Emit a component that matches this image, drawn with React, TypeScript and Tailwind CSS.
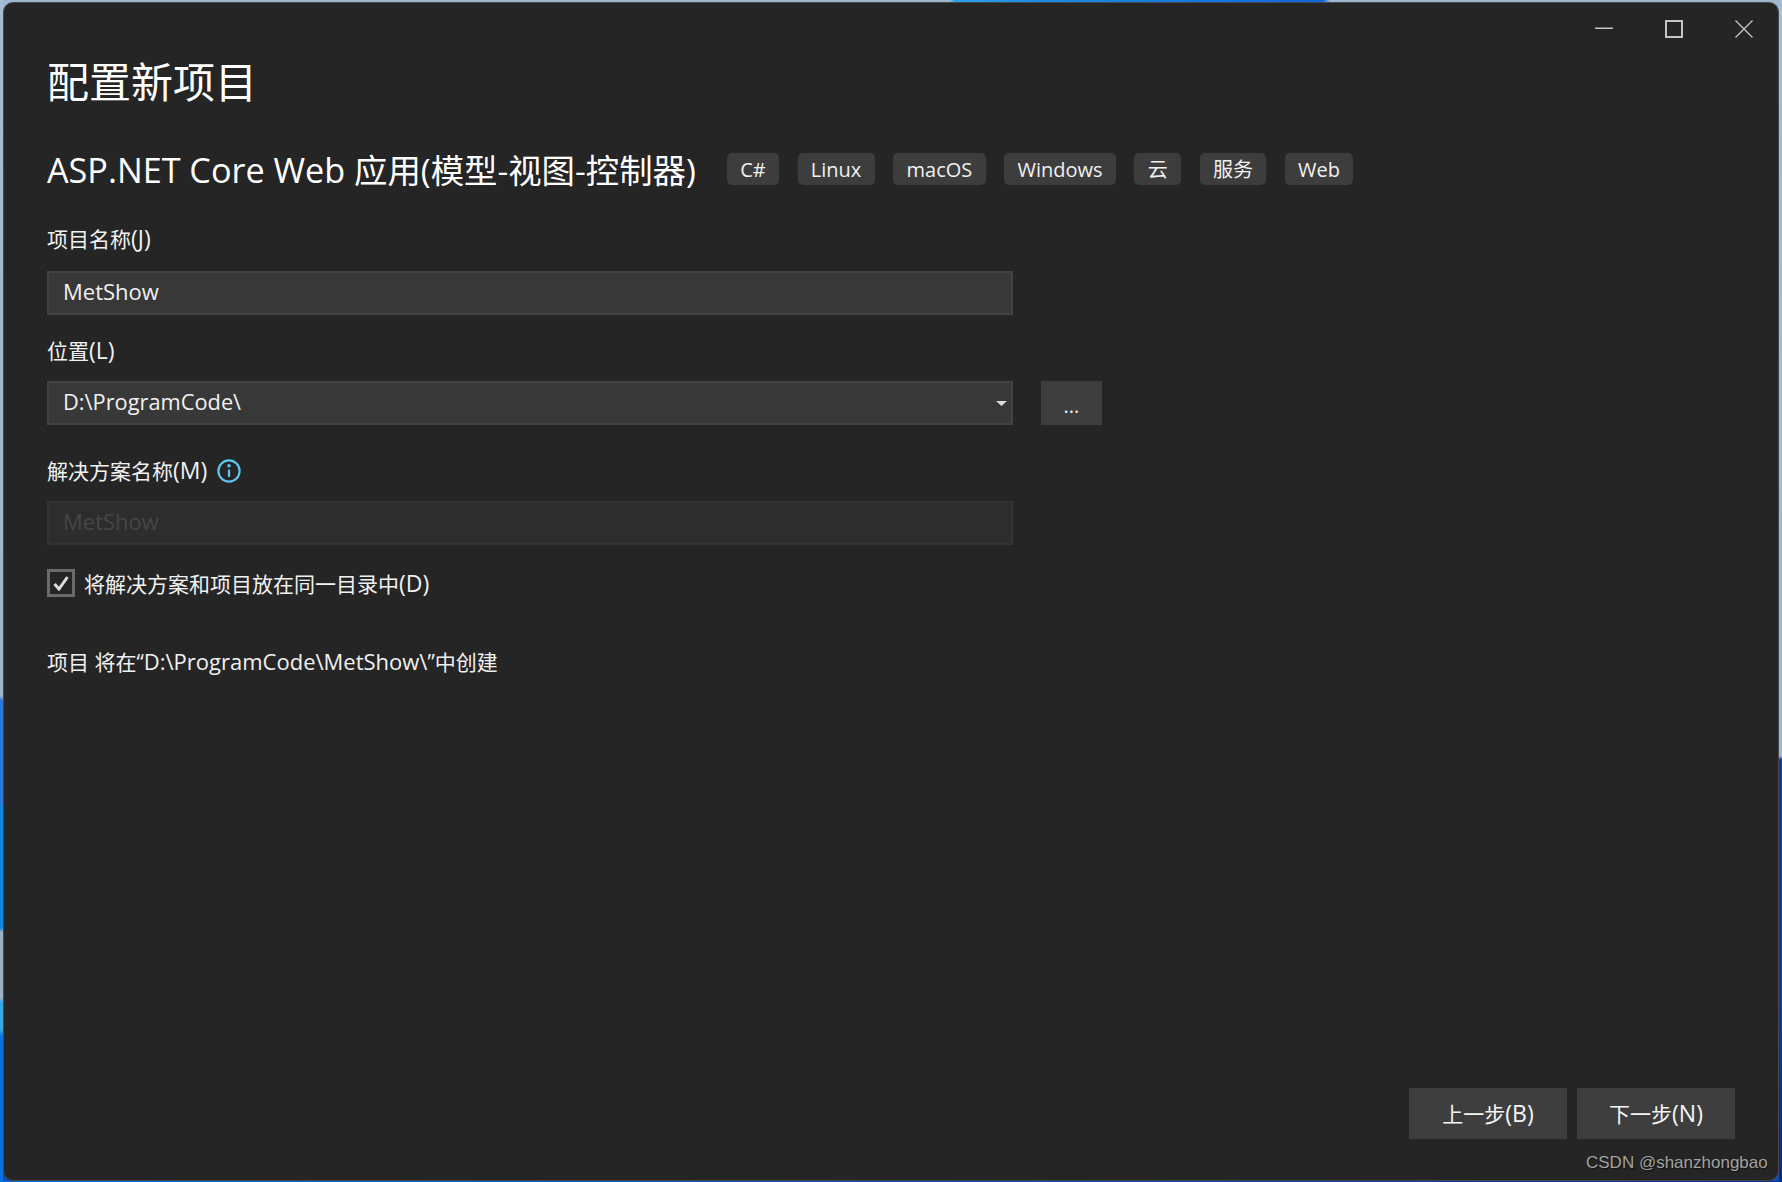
const latin = "font-['Open_Sans','Noto_Sans_CJK_SC',sans-serif]"

const tags = ["C#", "Linux", "macOS", "Windows", "云", "服务", "Web"]

function WindowControls() {
  return (
    <div className="flex justify-end gap-[52px] pt-[17px] pr-[25px] text-[#c4c4c4]">
      <svg width="18" height="18" viewBox="0 0 18 18" fill="none" stroke="currentColor" strokeWidth="1.5">
        <path d="M0 8.25H18" />
      </svg>
      <svg width="18" height="18" viewBox="0 0 18 18" fill="none" stroke="currentColor" strokeWidth="2">
        <rect x="1" y="1" width="16" height="16" />
      </svg>
      <svg width="18" height="18" viewBox="0 0 18 18" fill="none" stroke="currentColor" strokeWidth="1.4">
        <path d="M0.5 0.5L17.5 17.5M17.5 0.5L0.5 17.5" />
      </svg>
    </div>
  )
}

// the parens and latin letters run a bit larger than the CJK text in the original
function Key({ children }: { children: string }) {
  return <span className="text-[23px] leading-none">{children}</span>
}

export default function App() {
  return (
    <div className={`flex h-[1182px] w-[1782px] overflow-hidden text-[#f1f1f1] ${latin}`}>
      {/* wallpaper showing past the window edge */}
      <div className="w-[3px] shrink-0 bg-[linear-gradient(to_bottom,#a3bdd4_0,#9db4ca_696px,#2a75d8_701px,#2a75d8_805px,#0f88e0_808px,#0f88e0_928px,#9fb0c0_932px,#9fb0c0_998px,#3aa8e0_1002px,#3aa8e0_1030px,#0870e0_1036px,#0870e0_100%)]" />

      <div className="flex min-w-0 flex-1 flex-col bg-[linear-gradient(to_bottom,#9db7cf_50%,#0a50b8_50%)]">
        <div className="h-[2px] shrink-0 bg-[linear-gradient(to_right,#9db7cf_947px,#2aa0e8_952px,#1a8ae6_1050px,#1068dc_1320px,#9db7cf_1327px)]" />

        <div className="flex min-h-0 flex-1 flex-col rounded-[10px] border border-[#474747] bg-[#252525]">
          <WindowControls />

          <div className="flex flex-1 flex-col pl-[43px]">
            <h1 className="mt-[20px] text-[42px] font-normal leading-[48px] text-white">配置新项目</h1>

            <div className="mt-[47px] flex h-[32px] items-center">
              <h2 className="pt-[2px] text-[33.4px] font-normal leading-[32px] text-white">
                <span className="text-[34.2px] leading-none">ASP.NET Core Web </span>应用(模型-视图-控制器)
              </h2>
              <div className="ml-[31px] flex gap-[18.5px]">
                {tags.map((tag) => (
                  <span key={tag} className="flex h-[32px] items-center rounded-[5px] bg-[#3d3d3d] px-[13.35px] pt-[2px] text-[20px] leading-none text-[#f1f1f1]">
                    {tag}
                  </span>
                ))}
              </div>
            </div>

            <label className="mt-[40px] block text-[21px] leading-[28px]">项目名称<Key>(J)</Key></label>
            <div className="mt-[18px] flex h-[44px] w-[966px] items-center border-2 border-[#434343] bg-[#383838] px-[14px] pb-[4px] text-[22px] text-[#f1f1f1]">
              MetShow
            </div>

            <label className="mt-[22px] block text-[21px] leading-[28px]">位置<Key>(L)</Key></label>
            <div className="mt-[16px] flex gap-[28px]">
              <div className="flex h-[44px] w-[966px] items-center justify-between border-2 border-[#434343] bg-[#383838] pl-[14px] pr-[4px] text-[22px] text-[#f1f1f1]">
                <span className="pb-[1px] text-[21.8px]">D:\ProgramCode\</span>
                <svg width="11" height="5" viewBox="0 0 11 5" fill="#dcdcdc">
                  <path d="M0 0H11L5.5 5Z" />
                </svg>
              </div>
              <button className="flex h-[44px] w-[61px] items-end justify-center bg-[#3e3e3e] pb-[9px] text-[20px] leading-none text-[#f1f1f1]">
                ...
              </button>
            </div>

            <div className="mt-[32px] flex h-[28px] items-center gap-[10px]">
              <label className="text-[21px] leading-[28px]">解决方案名称<Key>(M)</Key></label>
              <svg width="24" height="24" viewBox="0 0 24 24" fill="none" stroke="#5cc6f0" strokeWidth="2.2">
                <circle cx="12" cy="12" r="10.6" />
                <path d="M12 10.5V18" />
                <circle cx="12" cy="6.8" r="0.7" fill="#5cc6f0" />
              </svg>
            </div>
            <div className="mt-[16px] flex h-[44px] w-[966px] items-center border-2 border-[#333333] bg-[#2d2d2d] px-[14px] pb-[4px] text-[22px] text-[#464646]">
              MetShow
            </div>

            <div className="mt-[24px] flex h-[28px] items-center gap-[9px]">
              <div className="flex h-[28px] w-[28px] items-center justify-center border-[3px] border-[#6b6b6b]">
                <svg width="16" height="15" viewBox="0 0 16 15" fill="none" stroke="#dcdcdc" strokeWidth="3">
                  <path d="M1.5 8L6 13L14.5 1" />
                </svg>
              </div>
              <span className="pt-[2px] text-[21px] leading-[28px]">将解决方案和项目放在同一目录中<Key>(D)</Key></span>
            </div>

            <p className="mt-[51px] text-[21px] leading-[28px]">
              项目 将在“<span className="text-[22px] leading-none">D:\ProgramCode\MetShow\</span>”中创建
            </p>

            <div className="mt-auto mb-[41px] mr-[43px] flex justify-end gap-[10px]">
              <button className="h-[51px] w-[158px] bg-[#3e3e3e] pt-[2px] text-[21px] text-[#f5f5f5]">上一步<Key>(B)</Key></button>
              <button className="h-[51px] w-[158px] bg-[#3e3e3e] pt-[2px] text-[21px] text-[#f5f5f5]">下一步<Key>(N)</Key></button>
            </div>
          </div>
        </div>

        <div className="h-px shrink-0 bg-[linear-gradient(to_right,#0870e0,#0a2f8a)]" />
      </div>

      <div className="w-[3px] shrink-0 bg-[linear-gradient(to_bottom,#a3bdd4_0,#9db7cf_756px,#0a3a9a_760px,#0a3a9a_1000px,#0a2a78_100%)]" />

      {/* csdn watermark stamped over the screenshot */}
      <span className="absolute left-[1586px] top-[1152px] font-['Liberation_Sans',sans-serif] text-[17px] leading-[22px] text-[#a3a3a3] [text-shadow:1px_1px_1px_#111]">
        CSDN @shanzhongbao
      </span>
    </div>
  )
}
